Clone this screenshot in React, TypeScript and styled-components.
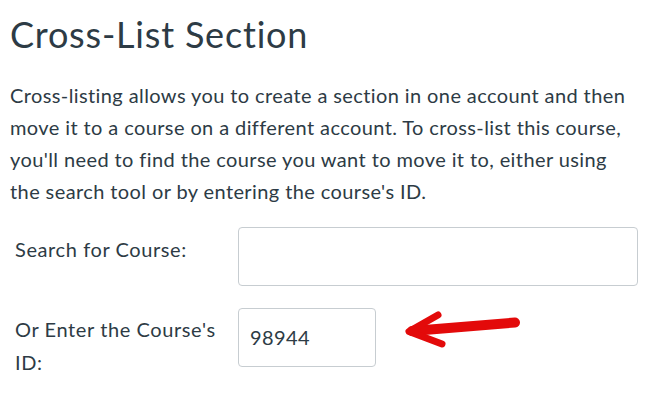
import styled, { createGlobalStyle } from 'styled-components';

const GlobalStyle = createGlobalStyle`
  body {
    margin: 0;
    background: #fff;
    font-family: Lato, "Open Sans", sans-serif;
    color: #2d3b45;
  }
`;

const Page = styled.div`
  padding: 12px 10px 0 10px;
  width: 664px;
  box-sizing: border-box;
`;

const Title = styled.h1`
  margin: 0;
  font-size: 36px;
  font-weight: 400;
  line-height: 44px;
  letter-spacing: 0.8px;
  color: #2d3b45;
`;

const Description = styled.p`
  margin: 23px 0 0;
  font-size: 20px;
  line-height: 32px;
  letter-spacing: 0.4px;
  max-width: 626px;
`;

const Form = styled.div`
  margin-top: 20px;
  display: flex;
  flex-direction: column;
  gap: 21px;
`;

const Row = styled.div`
  display: grid;
  grid-template-columns: 228px 1fr;
  align-items: start;
`;

const Label = styled.label`
  padding: 6px 10px 0 5px;
  font-size: 20px;
  line-height: 33px;
  letter-spacing: 0.6px;
`;

const FieldWrap = styled.div`
  display: flex;
  align-items: center;
`;

const Input = styled.input<{ $width: number }>`
  width: ${({ $width }) => $width}px;
  height: 59px;
  box-sizing: border-box;
  border: 1px solid #c7cdd1;
  border-radius: 4px;
  padding: 0 11px;
  font-family: Lato, "Open Sans", sans-serif;
  font-size: 20px;
  letter-spacing: 0.4px;
  color: #2d3b45;
  background: #fff;
  outline: none;
`;

const Arrow = styled.svg`
  margin-left: 24px;
`;

const Arrowhead = () => (
  <Arrow width="125" height="60" viewBox="0 0 125 60">
    <g stroke="#e30a0a" strokeLinecap="round" strokeLinejoin="round" fill="none">
      <path d="M12 24 L115 15.5" strokeWidth="10" />
      <path d="M38 8 L9 24.5 L42 37" strokeWidth="7" />
    </g>
  </Arrow>
);

export default function App() {
  return (
    <>
      <GlobalStyle />
      <Page>
        <Title>Cross-List Section</Title>
        <Description>
          Cross-listing allows you to create a section in one account and then move it to a course on a
          different account. To cross-list this course, you'll need to find the course you want to move it
          to, either using the search tool or by entering the course's ID.
        </Description>
        <Form>
          <Row>
            <Label>Search for Course:</Label>
            <FieldWrap>
              <Input $width={400} />
            </FieldWrap>
          </Row>
          <Row>
            <Label>Or Enter the Course's ID:</Label>
            <FieldWrap>
              <Input $width={138} defaultValue="98944" />
              <Arrowhead />
            </FieldWrap>
          </Row>
        </Form>
      </Page>
    </>
  );
}
